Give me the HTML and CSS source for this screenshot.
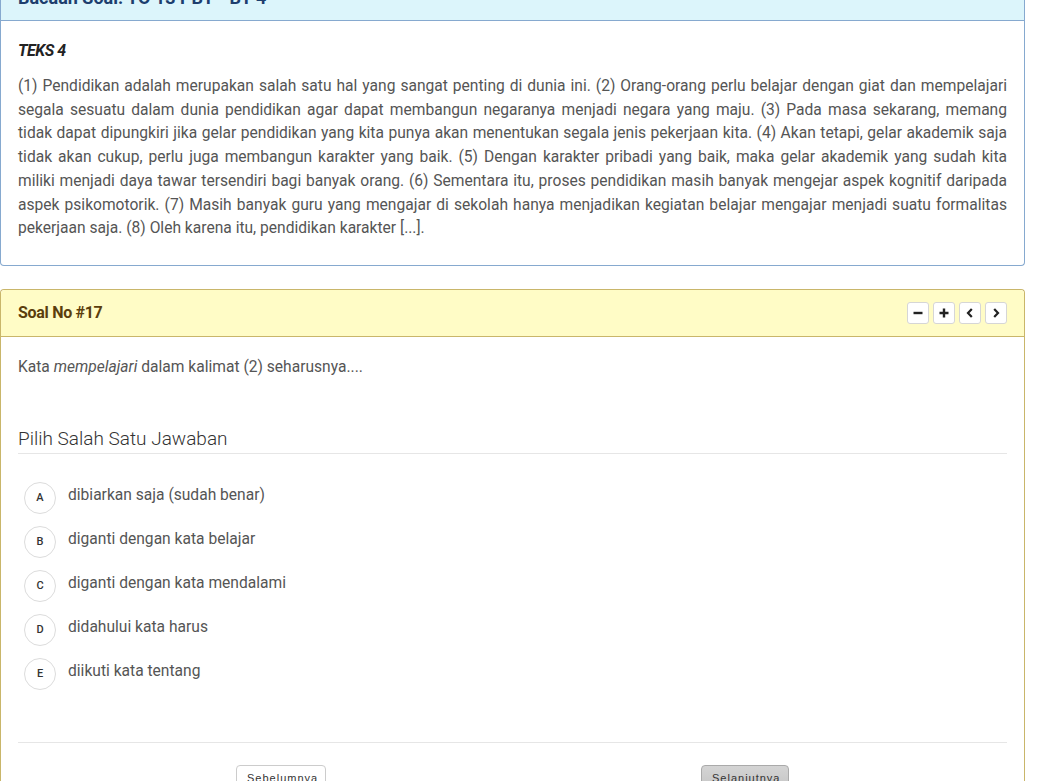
FILE: index.html
```html
<!DOCTYPE html>
<html>
<head>
<meta charset="utf-8">
<link rel="stylesheet" href="styles.css">
</head>
<body>
<div class="page">
  <section class="panel reading">
    <div class="reading-head"><span class="reading-title">Bacaan Soal: TO 13 PBT - BT 4</span></div>
    <div class="reading-body">
      <div class="teks-title">TEKS 4</div>
      <div class="passage">
        <span class="ln">(1) Pendidikan adalah merupakan salah satu hal yang sangat penting di dunia ini. (2) Orang-orang perlu belajar dengan giat dan mempelajari</span>
        <span class="ln">segala sesuatu dalam dunia pendidikan agar dapat membangun negaranya menjadi negara yang maju. (3) Pada masa sekarang, memang</span>
        <span class="ln">tidak dapat dipungkiri jika gelar pendidikan yang kita punya akan menentukan segala jenis pekerjaan kita. (4) Akan tetapi, gelar akademik saja</span>
        <span class="ln">tidak akan cukup, perlu juga membangun karakter yang baik. (5) Dengan karakter pribadi yang baik, maka gelar akademik yang sudah kita</span>
        <span class="ln">miliki menjadi daya tawar tersendiri bagi banyak orang. (6) Sementara itu, proses pendidikan masih banyak mengejar aspek kognitif daripada</span>
        <span class="ln">aspek psikomotorik. (7) Masih banyak guru yang mengajar di sekolah hanya menjadikan kegiatan belajar mengajar menjadi suatu formalitas</span>
        <span class="ln last">pekerjaan saja. (8) Oleh karena itu, pendidikan karakter [...].</span>
      </div>
    </div>
  </section>

  <section class="panel question">
    <div class="q-head">
      <div class="q-title">Soal No #17</div>
      <div class="q-tools">
        <button class="tool" aria-label="kecilkan"><svg width="12" height="12" viewBox="0 0 12 12"><path d="M1.5 6h9" stroke="#222" stroke-width="2.4"/></svg></button>
        <button class="tool" aria-label="besarkan"><svg width="12" height="12" viewBox="0 0 12 12"><path d="M1.5 6h9M6 1.5v9" stroke="#222" stroke-width="2.4"/></svg></button>
        <button class="tool" aria-label="sebelumnya"><svg width="12" height="12" viewBox="0 0 12 12"><path d="M7.8 2L4 6l3.8 4" fill="none" stroke="#222" stroke-width="2.2"/></svg></button>
        <button class="tool" aria-label="selanjutnya"><svg width="12" height="12" viewBox="0 0 12 12"><path d="M4.2 2L8 6l-3.8 4" fill="none" stroke="#222" stroke-width="2.2"/></svg></button>
      </div>
    </div>
    <div class="q-body">
      <p class="q-text">Kata <em>mempelajari</em> dalam kalimat (2) seharusnya....</p>
      <h3 class="choose">Pilih Salah Satu Jawaban</h3>
      <ul class="options">
        <li class="opt"><span class="letter">A</span><span class="opt-text">dibiarkan saja (sudah benar)</span></li>
        <li class="opt"><span class="letter">B</span><span class="opt-text">diganti dengan kata belajar</span></li>
        <li class="opt"><span class="letter">C</span><span class="opt-text">diganti dengan kata mendalami</span></li>
        <li class="opt"><span class="letter">D</span><span class="opt-text">didahului kata harus</span></li>
        <li class="opt"><span class="letter">E</span><span class="opt-text">diikuti kata tentang</span></li>
      </ul>
      <hr class="sep">
      <div class="nav">
        <button class="nav-btn prev">Sebelumnya</button>
        <button class="nav-btn next">Selanjutnya</button>
      </div>
    </div>
  </section>
</div>
</body>
</html>
```

FILE: styles.css
```css
html, body {
  margin: 0;
  padding: 0;
  background: #ffffff;
  overflow: hidden;
}
body {
  font-family: Roboto, "Liberation Sans", sans-serif;
  color: #555555;
}
.page {
  width: 1025px;
}
.panel {
  box-sizing: border-box;
  width: 1025px;
}
.reading {
  border: 1px solid #86a9cf;
  border-top: none;
  border-radius: 0 0 4px 4px;
}
.reading-head {
  height: 20px;
  overflow: hidden;
  background: #dcf5fb;
  border-bottom: 1px solid #86a9cf;
  padding-left: 17px;
}
.reading-title {
  display: block;
  margin-top: -14px;
  font-size: 18px;
  line-height: 24px;
  font-weight: 700;
  color: #1d3e6e;
}
.reading-body {
  padding: 18px 17px 24px 17px;
}
.teks-title {
  font-size: 16px;
  line-height: 24px;
  font-weight: 700;
  font-style: italic;
  color: #222;
  letter-spacing: -0.5px;
  margin-bottom: 12px;
}
.passage {
  font-size: 15.6px;
  line-height: 23.7px;
  color: #555555;
}
.ln {
  display: block;
  white-space: nowrap;
  text-align: justify;
  text-align-last: justify;
}
.ln.last {
  text-align-last: left;
}
.question {
  margin-top: 23px;
  border: 1px solid #c9b66a;
  border-bottom: none;
  border-radius: 4px 4px 0 0;
}
.q-head {
  display: flex;
  align-items: center;
  justify-content: space-between;
  height: 46px;
  background: #fffcc6;
  border-bottom: 1px solid #c9b66a;
  border-radius: 4px 4px 0 0;
  padding: 0 17px;
}
.q-title {
  font-size: 16px;
  font-weight: 700;
  color: #5b3e0c;
  letter-spacing: -0.3px;
}
.q-tools {
  display: flex;
  gap: 4px;
}
.tool {
  width: 22px;
  height: 22px;
  padding: 0;
  display: flex;
  align-items: center;
  justify-content: center;
  background: #ffffff;
  border: 1px solid #d6d6d6;
  border-radius: 3px;
}
.q-body {
  padding: 18px 17px 0 17px;
}
.q-text {
  margin: 0;
  font-size: 15.6px;
  line-height: 24px;
  color: #555555;
}
.q-text em {
  font-style: italic;
}
.choose {
  margin: 48px 0 0 0;
  font-size: 19px;
  line-height: 24px;
  font-weight: 300;
  color: #333;
  padding-bottom: 2px;
  border-bottom: 1px solid #e6e6e6;
}
.options {
  list-style: none;
  margin: 22px 0 0 0;
  padding: 0 0 0 6px;
}
.opt {
  display: flex;
  align-items: center;
  height: 44px;
  gap: 12px;
}
.letter {
  box-sizing: border-box;
  width: 32px;
  height: 32px;
  border: 1px solid #dcdcdc;
  border-radius: 50%;
  display: flex;
  align-items: center;
  justify-content: center;
  font-size: 11px;
  font-weight: 500;
  color: #333;
}
.opt-text {
  font-size: 15.6px;
  line-height: 20px;
  color: #555555;
  margin-bottom: 6px;
}
.sep {
  margin: 46px 0 0 0;
  border: none;
  border-top: 1px solid #e6e6e6;
}
.nav {
  display: flex;
  padding-left: 218px;
  gap: 375px;
  margin-top: 22px;
}
.nav-btn {
  height: 26px;
  padding: 0 10px;
  font-family: "Liberation Sans", sans-serif;
  font-size: 11px;
  letter-spacing: 1px;
  border-radius: 4px;
  color: #333;
}
.prev {
  width: 90px;
  background: #ffffff;
  border: 1px solid #cccccc;
}
.next {
  width: 88px;
  background: linear-gradient(#d4d4d4, #c4c4c4);
  border: 1px solid #aaaaaa;
}
```
